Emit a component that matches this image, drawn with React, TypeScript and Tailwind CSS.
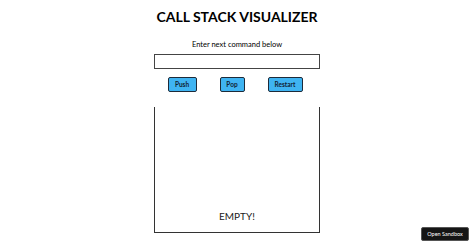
import React from "react";

export default function App() {
  return (
    <div className="relative w-[474px] h-[248px] bg-white overflow-hidden" style={{ fontFamily: "Lato, 'Noto Sans', sans-serif" }}>
      <div className="flex flex-col items-center">
        <h1 className="mt-[8px] text-[14px] leading-[17px] font-bold text-black">CALL STACK VISUALIZER</h1>
        <p className="mt-[15px] text-[7.5px] leading-[9px] text-black">Enter next command below</p>
        <input className="mt-[5px] w-[166px] h-[15px] border border-[#444] outline-none" />
        <div className="mt-[8px] mr-[4px] flex gap-[23px]">
          <button className="w-[29px] h-[15px] bg-[#3fb4f2] border border-[#1d2b3a] rounded-[2px] text-[6.5px] font-bold text-[#123]">Push</button>
          <button className="w-[25px] h-[15px] bg-[#3fb4f2] border border-[#1d2b3a] rounded-[2px] text-[6.5px] font-bold text-[#123]">Pop</button>
          <button className="w-[35px] h-[15px] bg-[#3fb4f2] border border-[#1d2b3a] rounded-[2px] text-[6.5px] font-bold text-[#123]">Restart</button>
        </div>
        <div className="mt-[15px] w-[166px] h-[126px] border-l border-r border-b border-[#333] flex flex-col justify-end items-center pb-[10px]">
          <span className="text-[10px] leading-[12px] text-[#222]">EMPTY!</span>
        </div>
      </div>
      <div className="absolute right-[5px] bottom-[7px] w-[48px] h-[14px] bg-[#151515] rounded-[2px] border border-[#555] flex items-center justify-center text-[5.5px] text-white">Open Sandbox</div>
    </div>
  );
}
